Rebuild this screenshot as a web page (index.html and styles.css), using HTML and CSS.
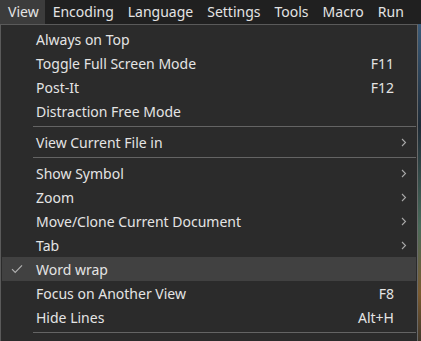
FILE: index.html
```html
<!DOCTYPE html>
<html>
<head>
<meta charset="utf-8">
<link rel="stylesheet" href="styles.css">
</head>
<body>
<div class="app">
  <div class="menubar">
    <span class="mb-item active">View</span>
    <span class="mb-item">Encoding</span>
    <span class="mb-item">Language</span>
    <span class="mb-item">Settings</span>
    <span class="mb-item">Tools</span>
    <span class="mb-item">Macro</span>
    <span class="mb-item">Run</span>
  </div>
  <div class="under">
    <div class="menu">
      <div class="item"><span class="check"></span><span class="label">Always on Top</span><span class="key"></span><span class="arrow"></span></div>
      <div class="item"><span class="check"></span><span class="label">Toggle Full Screen Mode</span><span class="key">F11</span><span class="arrow"></span></div>
      <div class="item"><span class="check"></span><span class="label">Post-It</span><span class="key">F12</span><span class="arrow"></span></div>
      <div class="item"><span class="check"></span><span class="label">Distraction Free Mode</span><span class="key"></span><span class="arrow"></span></div>
      <div class="sep"></div>
      <div class="item"><span class="check"></span><span class="label">View Current File in</span><span class="key"></span><span class="arrow"><svg width="6" height="9" viewBox="0 0 6 9"><path d="M1 1 L4.5 4.5 L1 8" fill="none" stroke="#a8a8a8" stroke-width="1.1"/></svg></span></div>
      <div class="sep"></div>
      <div class="item"><span class="check"></span><span class="label">Show Symbol</span><span class="key"></span><span class="arrow"><svg width="6" height="9" viewBox="0 0 6 9"><path d="M1 1 L4.5 4.5 L1 8" fill="none" stroke="#a8a8a8" stroke-width="1.1"/></svg></span></div>
      <div class="item"><span class="check"></span><span class="label">Zoom</span><span class="key"></span><span class="arrow"><svg width="6" height="9" viewBox="0 0 6 9"><path d="M1 1 L4.5 4.5 L1 8" fill="none" stroke="#a8a8a8" stroke-width="1.1"/></svg></span></div>
      <div class="item"><span class="check"></span><span class="label">Move/Clone Current Document</span><span class="key"></span><span class="arrow"><svg width="6" height="9" viewBox="0 0 6 9"><path d="M1 1 L4.5 4.5 L1 8" fill="none" stroke="#a8a8a8" stroke-width="1.1"/></svg></span></div>
      <div class="item"><span class="check"></span><span class="label">Tab</span><span class="key"></span><span class="arrow"><svg width="6" height="9" viewBox="0 0 6 9"><path d="M1 1 L4.5 4.5 L1 8" fill="none" stroke="#a8a8a8" stroke-width="1.1"/></svg></span></div>
      <div class="item hover"><span class="check"><svg width="12" height="10" viewBox="0 0 12 10"><path d="M1 5.2 L4.2 8.4 L11 1.4" fill="none" stroke="#b0b0b0" stroke-width="1.2"/></svg></span><span class="label">Word wrap</span><span class="key"></span><span class="arrow"></span></div>
      <div class="item"><span class="check"></span><span class="label">Focus on Another View</span><span class="key">F8</span><span class="arrow"></span></div>
      <div class="item"><span class="check"></span><span class="label">Hide Lines</span><span class="key">Alt+H</span><span class="arrow"></span></div>
      <div class="sep"></div>
      <div class="item"><span class="check"></span><span class="label">&nbsp;</span><span class="key"></span><span class="arrow"></span></div>
    </div>
    <div class="edge"></div>
  </div>
</div>
</body>
</html>
```

FILE: styles.css
```css
html, body {
  margin: 0;
  padding: 0;
  background: #1e1e1e;
  overflow: hidden;
}
.app {
  width: 421px;
  height: 341px;
  overflow: hidden;
  font-family: "Noto Sans", "Open Sans", sans-serif;
  font-size: 14px;
  color: #e4e4e4;
}
.menubar {
  display: flex;
  height: 24px;
  background: #202020;
  align-items: stretch;
}
.mb-item {
  display: flex;
  align-items: center;
  padding: 0 6.5px 0 7.5px;
  line-height: 24px;
}
.mb-item.active {
  padding-left: 8px;
  background: #3c3c3c;
}
.under {
  display: flex;
}
.menu {
  width: 415px;
  border: 1px solid #5a5a5a;
  border-right-color: #6a6a6a;
  background: #2b2b2b;
  padding: 2px 1px 0 1px;
}
.edge {
  width: 3px;
  background: linear-gradient(#3a5a78, #1e2a36 30%, #4a6a5a 60%, #7a5a30 80%, #2a2a2a);
}
.item {
  display: flex;
  align-items: center;
  height: 24px;
}
.item.hover {
  background: #414141;
}
.check {
  width: 34px;
  display: flex;
  justify-content: center;
}
.check svg {
  margin-left: -4px;
}
.label {
  flex: 1;
  white-space: nowrap;
}
.key {
  white-space: nowrap;
  text-align: right;
}
.arrow {
  width: 20px;
  padding-right: 2px;
  display: flex;
  justify-content: center;
}
.sep {
  height: 7px;
  display: flex;
  align-items: center;
}
.sep::before {
  content: "";
  display: block;
  height: 1px;
  margin-left: 31px;
  flex: 1;
  background: #646464;
}
```
